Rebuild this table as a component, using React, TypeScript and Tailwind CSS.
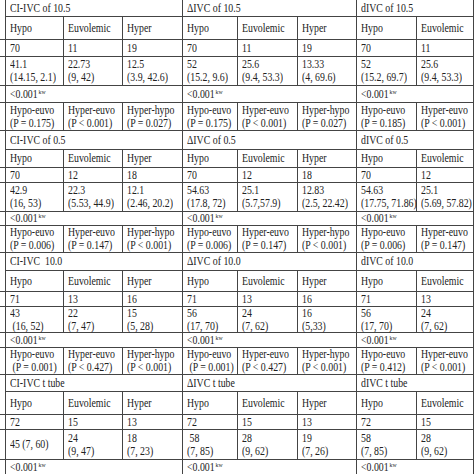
import React from 'react';

type Block = {
  titles: [string, string, string];
  heights: string[];
  counts: string[];
  values: string[];
  pairs: string[];
};

// cell widths, x lines at 5, 63, 122, 182, 237, 297, 356, 416, 473
const colW = ['w-[58px]', 'w-[59px]', 'w-[60px]', 'w-[55px]', 'w-[60px]', 'w-[59px]', 'w-[60px]', 'w-[58px] border-r'];
const groupW = ['w-[177px]', 'w-[174px]', 'w-[118px] border-r'];
const groups = ['Hypo', 'Euvolemic', 'Hyper', 'Hypo', 'Euvolemic', 'Hyper', 'Hypo', 'Euvolemic'];

const blocks: Block[] = [
  {
    titles: ['CI-IVC of 10.5', '\u0394IVC of 10.5', 'dIVC of 10.5'],
    heights: ['h-[17px]', 'h-[23px]', 'h-[17px]', 'h-[29px]', 'h-[17px]', 'h-[28px]'],
    counts: ['70', '11', '19', '70', '11', '19', '70', '11'],
    values: ['41.1\n(14.15, 2.1)', '22.73\n(9, 42)', '12.5\n(3.9, 42.6)', '52\n(15.2, 9.6)', '25.6\n(9.4, 53.3)', '13.33\n(4, 69.6)', '52\n(15.2, 69.7)', '25.6\n(9.4, 53.3)'],
    pairs: ['Hypo-euvo\n(P = 0.175)', 'Hyper-euvo\n(P < 0.001)', 'Hyper-hypo\n(P = 0.027)', 'Hypo-euvo\n(P = 0.175)', 'Hyper-euvo\n(P < 0.001)', 'Hyper-hypo\n(P = 0.027)', 'Hypo-euvo\n(P = 0.185)', 'Hyper-euvo\n(P < 0.001)'],
  },
  {
    titles: ['CI-IVC of 0.5', '\u0394IVC of 0.5', 'dIVC of 0.5'],
    heights: ['h-[19px]', 'h-[18px]', 'h-[15px]', 'h-[29px]', 'h-[14px]', 'h-[27px]'],
    counts: ['70', '12', '18', '70', '12', '18', '70', '12'],
    values: ['42.9\n(16, 53)', '22.3\n(5.53, 44.9)', '12.1\n(2.46, 20.2)', '54.63\n(17.8, 72)', '25.1\n(5.7,57.9)', '12.83\n(2.5, 22.42)', '54.63\n(17.75, 71.86)', '25.1\n(5.69, 57.82)'],
    pairs: ['Hypo-euvo\n(P = 0.006)', 'Hyper-euvo\n(P = 0.147)', 'Hyper-hypo\n(P < 0.001)', 'Hypo-euvo\n(P = 0.006)', 'Hyper-euvo\n(P = 0.147)', 'Hyper-hypo\n(P < 0.001)', 'Hypo-euvo\n(P = 0.006)', 'Hyper-euvo\n(P = 0.147)'],
  },
  {
    titles: ['CI-IVC  10.0', '\u0394IVC of 10.0', 'dIVC of 10.0'],
    heights: ['h-[18px]', 'h-[21px]', 'h-[15px]', 'h-[26px]', 'h-[15px]', 'h-[27px]'],
    counts: ['71', '13', '16', '71', '13', '16', '71', '13'],
    values: ['43\n (16, 52)', '22\n(7, 47)', '15\n(5, 28)', '56\n(17, 70)', '24\n(7, 62)', '16\n(5,33)', '56\n(17, 70)', '24\n(7, 62)'],
    pairs: ['Hypo-euvo\n (P = 0.001)', 'Hyper-euvo\n(P < 0.427)', 'Hyper-hypo\n(P < 0.001)', 'Hypo-euvo\n (P = 0.001)', 'Hyper-euvo\n(P < 0.427)', 'Hyper-hypo\n(P < 0.001)', 'Hypo-euvo\n(P = 0.412)', 'Hyper-euvo\n(P < 0.001)'],
  },
  {
    titles: ['CI-IVC t tube', '\u0394IVC t tube', 'dIVC t tube'],
    heights: ['h-[17px]', 'h-[23px]', 'h-[15px]', 'h-[30px]', 'h-[15px]'],
    counts: ['72', '15', '13', '72', '15', '13', '72', '15'],
    values: ['45 (7, 60)', '24\n(9, 47)', '18\n(7, 23)', ' 58\n(7, 85)', '28\n(9, 62)', '19\n(7, 26)', '58\n(7, 85)', '28\n(9, 62)'],
    pairs: [],
  },
];

const cell = 'flex items-center pl-[4px] border-l border-b border-[#444] shrink-0';
// the source type is narrower than Liberation Serif, so squeeze it a bit
const txt = 'inline-block whitespace-pre leading-[13px] origin-left scale-x-[0.82]';

function PValue() {
  return (
    <span className={txt}>
      &lt;0.001<sup className="text-[7px] ml-[1px] -top-[4px]">kw</sup>
    </span>
  );
}

function Row({ h, stubLine = true, children }: { h: string; stubLine?: boolean; children: React.ReactNode }) {
  return (
    <div className={`flex ${h}`}>
      <div className={`w-[5px] shrink-0 ${stubLine ? 'border-b border-[#444]' : ''}`} />
      {children}
    </div>
  );
}

function CellRow({ h, items }: { h: string; items: string[] }) {
  return (
    <Row h={h}>
      {items.map((t, i) => (
        <div key={i} className={`${cell} ${colW[i]}`}>
          <span className={txt}>{t}</span>
        </div>
      ))}
    </Row>
  );
}

export default function App() {
  return (
    <div className="w-[474px] h-[474px] overflow-hidden bg-white text-[12px] text-[#222] font-['Liberation_Serif',serif]">
      {blocks.map((b, bi) => (
        <div key={bi} className="flex flex-col">
          <Row h={b.heights[0]} stubLine={false}>
            {b.titles.map((t, i) => (
              <div key={i} className={`${cell} ${groupW[i]}`}>
                <span className={txt}>{t}</span>
              </div>
            ))}
          </Row>
          <CellRow h={b.heights[1]} items={groups} />
          <CellRow h={b.heights[2]} items={b.counts} />
          <CellRow h={b.heights[3]} items={b.values} />
          <Row h={b.heights[4]}>
            {groupW.map((w, i) => (
              <div key={i} className={`${cell} ${w}`}><PValue /></div>
            ))}
          </Row>
          {b.pairs.length > 0 && <CellRow h={b.heights[5]} items={b.pairs} />}
        </div>
      ))}
    </div>
  );
}
